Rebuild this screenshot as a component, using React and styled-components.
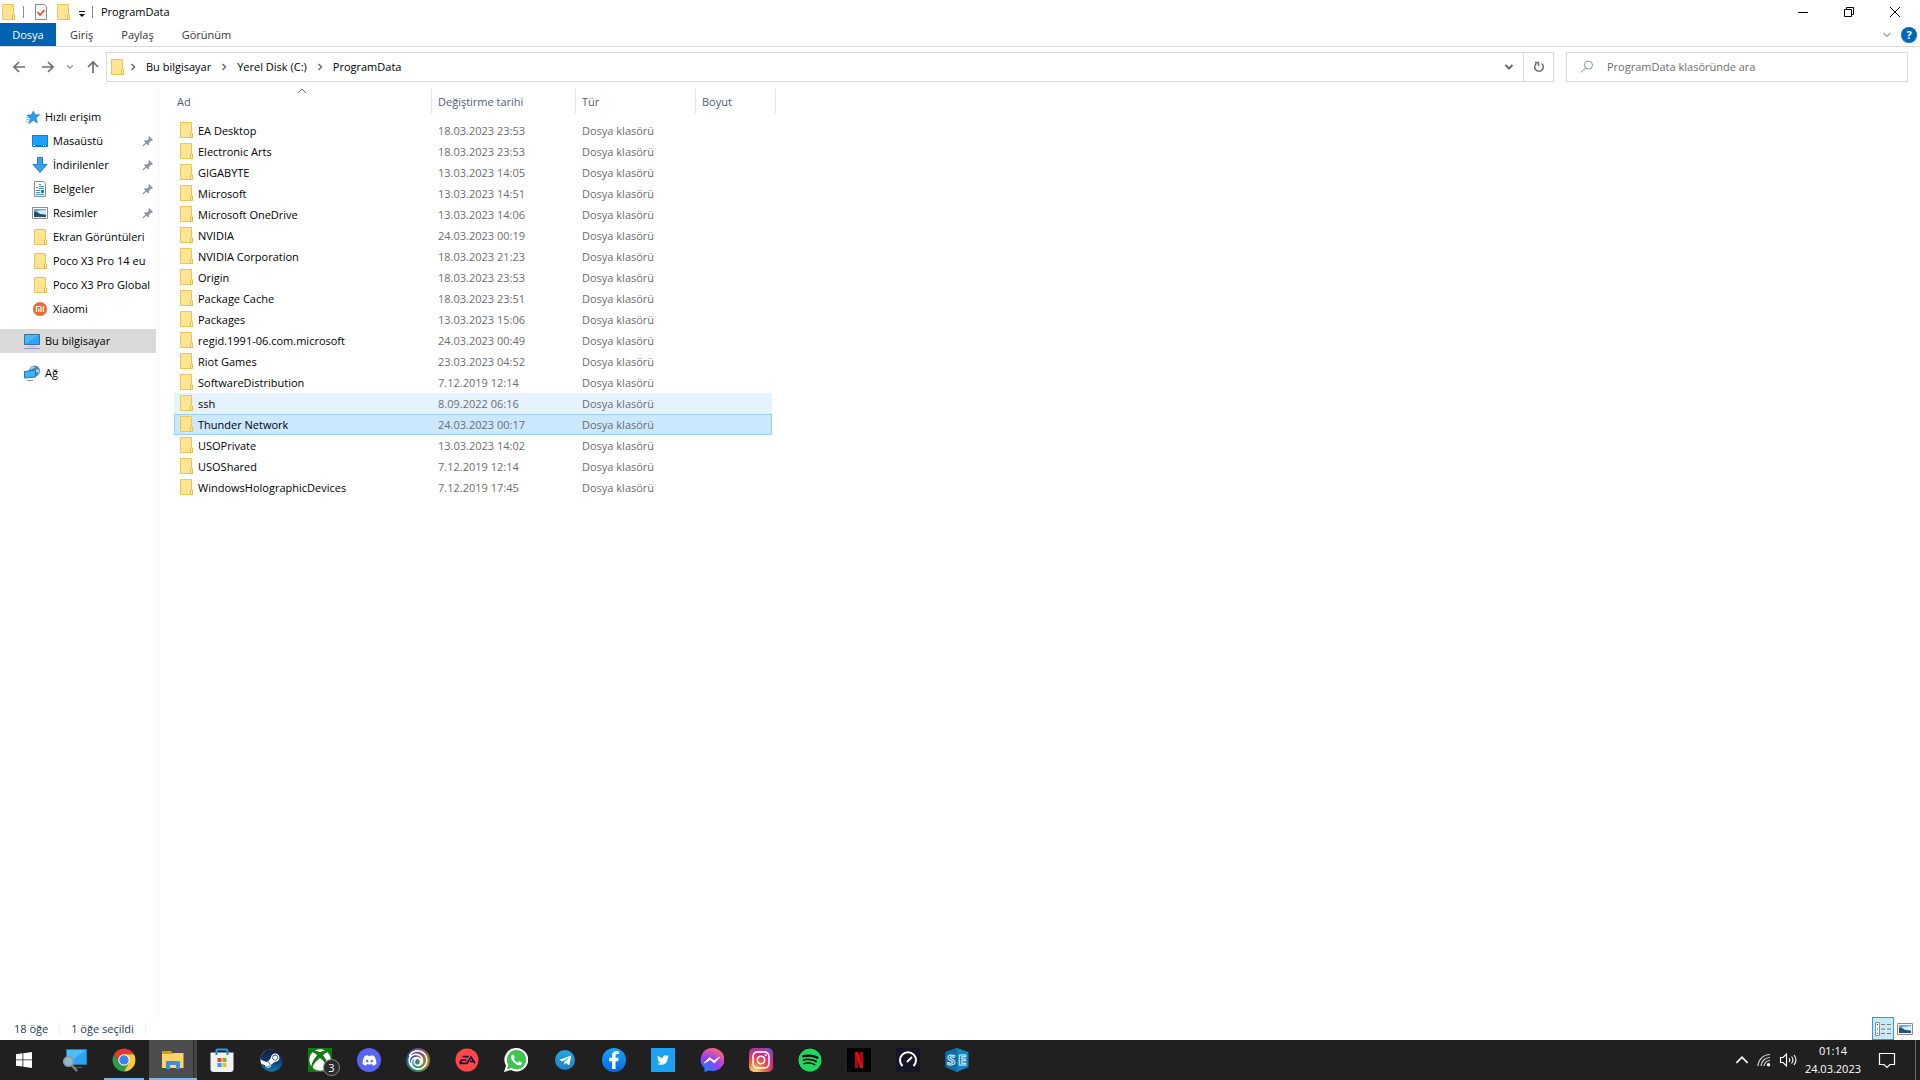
import React, { useState } from 'react';
import styled, { createGlobalStyle } from 'styled-components';
import {
  FaXbox, FaDiscord, FaTelegramPlane, FaFacebookF, FaTwitter, FaInstagram, FaSpotify, FaSteam,
} from 'react-icons/fa';
import { SiUbisoft } from 'react-icons/si';

const GlobalStyle = createGlobalStyle`
  * {
    box-sizing: border-box;
  }
  body {
    margin: 0;
    background: #fff;
    color: #000;
    font-family: "Open Sans", "Noto Sans", sans-serif;
    font-size: 11px;
    line-height: 16px;
  }
  button, input {
    margin: 0;
    padding: 0;
    border: none;
    background: none;
    color: inherit;
    font: inherit;
  }
  svg {
    display: block;
    flex: none;
  }
`;

const files = [
  ['EA Desktop', '18.03.2023 23:53'],
  ['Electronic Arts', '18.03.2023 23:53'],
  ['GIGABYTE', '13.03.2023 14:05'],
  ['Microsoft', '13.03.2023 14:51'],
  ['Microsoft OneDrive', '13.03.2023 14:06'],
  ['NVIDIA', '24.03.2023 00:19'],
  ['NVIDIA Corporation', '18.03.2023 21:23'],
  ['Origin', '18.03.2023 23:53'],
  ['Package Cache', '18.03.2023 23:51'],
  ['Packages', '13.03.2023 15:06'],
  ['regid.1991-06.com.microsoft', '24.03.2023 00:49'],
  ['Riot Games', '23.03.2023 04:52'],
  ['SoftwareDistribution', '7.12.2019 12:14'],
  ['ssh', '8.09.2022 06:16'],
  ['Thunder Network', '24.03.2023 00:17'],
  ['USOPrivate', '13.03.2023 14:02'],
  ['USOShared', '7.12.2019 12:14'],
  ['WindowsHolographicDevices', '7.12.2019 17:45'],
];

// ---- explorer icons ----

const FolderIcon = () => (
  <svg width="16" height="16" viewBox="0 0 16 16">
    <path d="M2.500.5h11v10l1 .5v4.500h-12z" fill="#ffe593" stroke="#ecc653" />
    <path d="M12.500 15.500V11l1-.5 1 .5v4.500z" fill="#ffe9a6" stroke="#e8bd45" />
  </svg>
);

const CheckDocIcon = () => (
  <svg width="16" height="16" viewBox="0 0 16 16">
    <path d="M2.500.5h9l2 2v13h-11z" fill="#f7f7f7" stroke="#8a8a8a" />
    <path d="M4.500 8l2.500 3 4.500-5" fill="none" stroke="#e8442e" strokeWidth="1.600" />
  </svg>
);

const StarIcon = () => (
  <svg width="16" height="16" viewBox="0 0 16 16">
    <path d="M9.500 2l1.400 3.800 4.600.1-3.600 2.900 1.400 5.200-4.100-2.800-4.500 3.300 1.800-5L3 6.300l4.500-.5z" fill="#2ba0ef" stroke="#1684d6" strokeWidth=".8" />
    <path d="M2 8.500h3M2 10.500h3M2 12.500h2" stroke="#8fcaf3" />
  </svg>
);

const DesktopIcon = () => (
  <svg width="16" height="16" viewBox="0 0 16 16">
    <path d="M.5 2.500h15v11H.5z" fill="#1ba1fa" stroke="#0d7fd0" />
    <path d="M1 12.500h14" stroke="#0c68b5" />
    <path d="M1 12.500h2M11 12.500h1M13 12.500h1" stroke="#fff" />
  </svg>
);

const DownloadIcon = () => (
  <svg width="16" height="16" viewBox="0 0 16 16">
    <path d="M5.500.5h5v7h4.500l-7 8-7-8h4.500z" fill="#3f9ce6" stroke="#2b7fc8" />
  </svg>
);

const DocumentIcon = () => (
  <svg width="16" height="16" viewBox="0 0 16 16">
    <path d="M2.500.5h9l2 2v13h-11z" fill="#fff" stroke="#8c8c8c" />
    <path d="M7 3.500h2M4 6.500h2M7 5.500h5M7 7.500h5M4 9.500h4M4 11.500h4M4 13.500h8" stroke="#3c95d2" />
    <path d="M9 9h3v3H9z" fill="#39789b" />
  </svg>
);

const PictureIcon = () => (
  <svg width="16" height="16" viewBox="0 0 16 16">
    <path d="M.5 2.500h15v11H.5z" fill="#fff" stroke="#8c8c8c" />
    <path d="M2 4h12v8H2z" fill="#6ba6e0" />
    <path d="M5 6l9-1v4H7z" fill="#d3ebf6" />
    <path d="M2 6.500c3 0 5 3 12 3.500v2H2z" fill="#275160" />
  </svg>
);

const MiIcon = () => (
  <svg width="16" height="16" viewBox="0 0 16 16">
    <circle cx="8" cy="8" r="7" fill="#ea6a35" />
    <path d="M4.500 11V5.500h3q1.500 0 1.500 1.500v4M6.800 11V7.500M11.300 5v6" fill="none" stroke="#fff" strokeWidth="1.200" />
  </svg>
);

const ComputerIcon = () => (
  <svg width="16" height="16" viewBox="0 0 16 16">
    <path d="M.5 1.500h15v10H.5z" fill="#49b7f5" stroke="#38729b" />
    <path d="M1 11l14-9v9z" fill="#2ba5ee" />
    <path d="M4 13.500h8" stroke="#b4c0cc" />
    <path d="M0 15.500h16" stroke="#8797b8" />
  </svg>
);

const NetworkIcon = () => (
  <svg width="16" height="16" viewBox="0 0 16 16">
    <circle cx="10.500" cy="6" r="5.500" fill="#4d87ad" />
    <path d="M6 3c2-2 4-2 5-1-1 2-3 1-4 3zM12 4l3 1v3l-3-1z" fill="#a9d3ea" />
    <path d="M.5 6.500l11-1.500v7l-11 1z" fill="#3db1f5" stroke="#2377b3" />
    <path d="M3 15.500h6" stroke="#8797b8" />
  </svg>
);

const PinIcon = () => (
  <svg width="12" height="12" viewBox="0 0 12 12">
    <path d="M7 1l4 4-1 1-1-.3-2 2 .2 1.800-1 1L2 6.300l1-1 2 .2 2-2L6.300 2z" fill="#8c96a3" />
    <path d="M4 8l-3 3" stroke="#8c96a3" strokeWidth="1.300" />
  </svg>
);

const Chevron = ({ dir = 'right', size = 10, width = 1.5, color = '#6d6d6d' }) => {
  const paths = { right: 'M3.500 2l3 3-3 3', down: 'M1.500 3l3.500 3.500L8.500 3', up: 'M1 7l4-4 4 4' };
  return (
    <svg width={size} height={size} viewBox="0 0 10 10">
      <path d={paths[dir]} fill="none" stroke={color} strokeWidth={width} />
    </svg>
  );
};

const arrows = {
  left: 'M13 8H2M7 3L2 8l5 5',
  right: 'M3 8h11M9 3l5 5-5 5',
  up: 'M8 14V3M3 8l5-5 5 5',
};

const Arrow = ({ dir }) => (
  <svg width="16" height="16" viewBox="0 0 16 16">
    <path d={arrows[dir]} fill="none" stroke="#6f6f6f" strokeWidth="1.700" />
  </svg>
);

// ---- taskbar icons ----

const WindowsIcon = () => (
  <svg width="16" height="16" viewBox="0 0 16 16">
    <path d="M0 2.200L6.500 1.300v6.200H0zM7.300 1.200L16 0v7.500H7.300zM0 8.300h6.500v6.200L0 13.700zM7.300 8.300H16V16l-8.700-1.200z" fill="#fff" />
  </svg>
);

const SearchScreenIcon = () => (
  <svg width="24" height="24" viewBox="0 0 24 24">
    <path d="M3.500 1.500h20v15h-20z" fill="#4dbcfa" stroke="#2b79a8" />
    <path d="M4 16L23 2v14z" fill="#2da4ee" />
    <path d="M11 19.500h8" stroke="#56636c" />
    <path d="M8.500 17l5.500 6" stroke="#77828d" strokeWidth="2.500" />
    <circle cx="5.500" cy="13.500" r="4.800" fill="#8fb9d0" stroke="#8d979e" strokeWidth="1.500" />
  </svg>
);

const ChromeIcon = () => (
  <svg width="24" height="24" viewBox="1 1 46 46">
    <path d="M4.950 13A22 22 0 0 1 43.050 13H24l-9.500 16.500z" fill="#e33b2e" />
    <path d="M4.950 13A22 22 0 0 0 24 46l9.500-16.500h-19z" fill="#2a9d4b" />
    <path d="M24 46A22 22 0 0 0 43.050 13H24l9.500 16.500z" fill="#fcc934" />
    <circle cx="24" cy="24" r="11" fill="#fff" />
    <circle cx="24" cy="24" r="9" fill="#3e82ee" />
  </svg>
);

const ExplorerIcon = () => (
  <svg width="24" height="24" viewBox="0 0 24 24">
    <path d="M1 3h9l1.500 2H22v3H1z" fill="#dd9a12" />
    <path d="M1 6h10.500L13 5h9.500v15H1z" fill="#ffd469" />
    <path d="M5 21v-7q0-1 1-1h12q1 0 1 1v7h-4v-4H9v4z" fill="#3d8fdb" />
  </svg>
);

const StoreIcon = () => (
  <svg width="24" height="24" viewBox="0 0 24 24">
    <path d="M6.500 7V2.500q0-1 1-1h9q1 0 1 1V7" fill="none" stroke="#24a0ea" strokeWidth="2" />
    <path d="M.5 4.500h23V21q0 3-3 3h-17q-3 0-3-3z" fill="#f2f2f2" />
    <path d="M6.500 4v3M17.500 4v3" stroke="#1789cf" strokeWidth="2" />
    <path d="M7.500 10h4v4h-4z" fill="#e8472c" />
    <path d="M12.500 10h4v4h-4z" fill="#78b828" />
    <path d="M7.500 15h4v4h-4z" fill="#2f9de2" />
    <path d="M12.500 15h4v4h-4z" fill="#f6b51c" />
  </svg>
);

const SteamIcon = () => (
  <>
    <svg width="0" height="0">
      <linearGradient id="steam" x1="0" y1="0" x2="0" y2="1">
        <stop offset="0" stopColor="#15183f" />
        <stop offset=".5" stopColor="#0f3a70" />
        <stop offset="1" stopColor="#1479b0" />
      </linearGradient>
    </svg>
    <FaSteam size={23} fill="url(#steam)" />
  </>
);

const EaIcon = () => (
  <svg width="24" height="24" viewBox="0 0 24 24">
    <circle cx="12" cy="12" r="11.500" fill="#ff4747" />
    <path d="M7.500 8.700h6M6 12h5.500M4.500 15.300h7.500l4-6.300 4 6.300M15 13.500h3.500M6.500 12l-1.500 3" fill="none" stroke="#10103c" strokeWidth="1.700" />
  </svg>
);

const WhatsAppIcon = () => (
  <svg width="24" height="24" viewBox="0 0 24 24">
    <path d="M12.500 0A11.700 11.700 0 1 1 7 22L0 24l2-6.500A11.700 11.700 0 0 1 12.500 0z" fill="#fff" />
    <path d="M12.500 2A9.700 9.700 0 1 1 7.500 20L3 21.200l1.200-4.500A9.700 9.700 0 0 1 12.500 2z" fill="#40c351" />
    <path d="M8.500 6.500c-2 1-2 3-.5 5.500 2 3.200 5 5.500 7.700 5.300 1.500-.2 2.500-1.300 2.300-2.600l-2.700-1.400-1.300 1.500c-2-.7-3.500-2.300-4.200-4l1-1.300-1.200-2.800z" fill="#fff" />
  </svg>
);

const MessengerIcon = () => (
  <svg width="24" height="24" viewBox="0 0 24 24">
    <defs>
      <radialGradient id="messenger" cx=".2" cy="1" r="1.100">
        <stop offset="0" stopColor="#0a8dff" />
        <stop offset=".55" stopColor="#9a3cf8" />
        <stop offset="1" stopColor="#ff6a70" />
      </radialGradient>
    </defs>
    <path d="M12 0a12 11.500 0 1 1-3 22.500L4.500 24V20A11.500 11.500 0 0 1 12 0z" fill="url(#messenger)" />
    <path d="M4.500 15l5-5.500 4.500 3.500 5.500-4-5 6-4.500-3.500z" fill="#fff" stroke="#fff" strokeLinejoin="round" />
  </svg>
);

const NetflixIcon = () => (
  <svg width="24" height="24" viewBox="0 0 24 24">
    <path d="M0 0h24v24H0z" fill="#000" />
    <path d="M8 4h3v16l-3 .3zM13 4h3v16.300l-3-.3z" fill="#b1060f" />
    <path d="M8 4h3l5 16.300-3-.3z" fill="#e50914" />
  </svg>
);

const SpeedIcon = () => (
  <svg width="24" height="24" viewBox="0 0 24 24">
    <path d="M0 0h24v24H0z" fill="#141526" />
    <path d="M6.500 18a8 8 0 1 1 11 0" fill="none" stroke="#fff" strokeWidth="2" />
    <path d="M11 14l5-5" stroke="#fff" strokeWidth="2" />
  </svg>
);

const HexIcon = () => (
  <svg width="24" height="24" viewBox="0 0 24 24">
    <path d="M12 0l11.500 4v15L12 24 .5 19V4z" fill="#1583bd" />
    <path d="M12 0v24L.5 19V4z" fill="#0e6da3" />
    <g fill="#0e6da3" stroke="#d4f1ff" fontSize="15" fontWeight="bold">
      <text x="2" y="17">S</text>
      <text x="13" y="17">E</text>
    </g>
  </svg>
);

const WifiIcon = () => (
  <svg width="14" height="14" viewBox="0 0 14 14">
    <path d="M1 13A12 12 0 0 1 13 1.500M4 13a9 9 0 0 1 9-8.500M7 13a6 6 0 0 1 6-5.500" fill="none" stroke="#d8d8d8" strokeWidth="1.200" />
    <circle cx="11.500" cy="11.800" r="1.700" fill="#fff" />
  </svg>
);

const VolumeIcon = () => (
  <svg width="18" height="14" viewBox="0 0 18 14">
    <path d="M1.500 4.500H4L7.500 1v12L4 9.500H1.500zM10 5q1.500 2 0 4M12.500 3.500q3 3.500 0 7M15 2q4 5 0 10" fill="none" stroke="#fff" strokeWidth="1.100" />
  </svg>
);

const ActionIcon = () => (
  <svg width="18" height="18" viewBox="0 0 18 18">
    <path d="M1.500 2.500h15v11H12l-3 3-3-3H1.500z" fill="none" stroke="#fff" strokeWidth="1.200" />
  </svg>
);

const quickLinks = [
  { name: 'Masaüstü', icon: <DesktopIcon />, pinned: true },
  { name: 'İndirilenler', icon: <DownloadIcon />, pinned: true },
  { name: 'Belgeler', icon: <DocumentIcon />, pinned: true },
  { name: 'Resimler', icon: <PictureIcon />, pinned: true },
  { name: 'Ekran Görüntüleri', icon: <FolderIcon /> },
  { name: 'Poco X3 Pro 14 eu', icon: <FolderIcon /> },
  { name: 'Poco X3 Pro Global', icon: <FolderIcon /> },
  { name: 'Xiaomi', icon: <MiIcon /> },
];

const App = () => {
  const [selected, setSelected] = useState('Thunder Network');
  const [query, setQuery] = useState('');

  return (
    <Window>
      <GlobalStyle />
      <TitleBar>
        <QuickTools>
          <FolderIcon />
          <Separator />
          <ToolButton aria-label="Özellikler"><CheckDocIcon /></ToolButton>
          <ToolButton aria-label="Yeni klasör"><FolderIcon /></ToolButton>
          <ToolButton aria-label="Özelleştir">
            <svg width="9" height="16" viewBox="0 0 9 16">
              <path d="M2 7.500h6" stroke="#000" />
              <path d="M2 10h6l-3 3z" fill="#000" />
            </svg>
          </ToolButton>
          <Separator />
        </QuickTools>
        <Title>ProgramData</Title>
        <WindowButton aria-label="Simge durumuna küçült">
          <svg width="10" height="10" viewBox="0 0 10 10"><path d="M0 5.500h10" stroke="#000" /></svg>
        </WindowButton>
        <WindowButton aria-label="Önceki boyut">
          <svg width="10" height="10" viewBox="0 0 10 10">
            <path d="M.5 2.500h7v7h-7zM2.500 2V.5h7v7H8" fill="none" stroke="#000" />
          </svg>
        </WindowButton>
        <WindowButton aria-label="Kapat">
          <svg width="10" height="10" viewBox="0 0 10 10"><path d="M0 0l10 10M10 0L0 10" stroke="#000" /></svg>
        </WindowButton>
      </TitleBar>

      <Ribbon>
        <FileTab>Dosya</FileTab>
        <Tab>Giriş</Tab>
        <Tab>Paylaş</Tab>
        <Tab>Görünüm</Tab>
        <RibbonEnd>
          <ToolButton aria-label="Şeridi genişlet"><Chevron dir="down" color="#999" width={1.2} /></ToolButton>
          <HelpButton aria-label="Yardım">?</HelpButton>
        </RibbonEnd>
      </Ribbon>

      <NavBar>
        <NavButtons>
          <ToolButton aria-label="Geri"><Arrow dir="left" /></ToolButton>
          <ToolButton aria-label="İleri"><Arrow dir="right" /></ToolButton>
          <ToolButton aria-label="Son konumlar"><Chevron dir="down" size={8} color="#888" /></ToolButton>
          <ToolButton aria-label="Yukarı"><Arrow dir="up" /></ToolButton>
        </NavButtons>
        <AddressBar>
          <FolderIcon />
          <Chevron />
          <Crumb>Bu bilgisayar</Crumb>
          <Chevron />
          <Crumb>Yerel Disk (C:)</Crumb>
          <Chevron />
          <Crumb>ProgramData</Crumb>
          <AddressEnd>
            <ToolButton aria-label="Önceki konumlar"><Chevron dir="down" width={2} /></ToolButton>
            <RefreshButton aria-label="Yenile">
              <svg width="12" height="12" viewBox="0 0 12 12">
                <path d="M3.500 2.500A4.300 4.300 0 1 0 8.500 2.500M2 1.500h3.500V5" fill="none" stroke="#6d6d6d" strokeWidth="1.500" />
              </svg>
            </RefreshButton>
          </AddressEnd>
        </AddressBar>
        <SearchBox>
          <svg width="14" height="14" viewBox="0 0 14 14">
            <circle cx="8.500" cy="5" r="4" fill="none" stroke="#8a9095" />
            <path d="M5.500 8L1 12.500" stroke="#8a9095" />
          </svg>
          <SearchInput
            type="text"
            aria-label="ProgramData klasöründe ara"
            placeholder="ProgramData klasöründe ara"
            value={query}
            onChange={(e) => setQuery(e.target.value)}
          />
        </SearchBox>
      </NavBar>

      <Body>
        <Sidebar>
          <SideGroup>
            <SideLink href="#quick"><StarIcon />Hızlı erişim</SideLink>
            {quickLinks.map((link) => (
              <SideLink key={link.name} href="#folder" $nested>
                {link.icon}
                <SideName>{link.name}</SideName>
                {link.pinned && <PinIcon />}
              </SideLink>
            ))}
          </SideGroup>
          <SideLink href="#computer" $active><ComputerIcon />Bu bilgisayar</SideLink>
          <SideLink href="#network"><NetworkIcon />Ağ</SideLink>
        </Sidebar>
        <Content>
          <FileTable>
            <colgroup>
              <col width="257" />
              <col width="144" />
              <col width="120" />
              <col width="77" />
            </colgroup>
            <thead>
              <tr>
                <HeadCell>
                  Ad
                  <SortMark><Chevron dir="up" width={1} /></SortMark>
                </HeadCell>
                <HeadCell>Değiştirme tarihi</HeadCell>
                <HeadCell>Tür</HeadCell>
                <HeadCell>Boyut</HeadCell>
              </tr>
            </thead>
            <FileRows>
              {files.map(([name, date]) => (
                <FileRow
                  key={name}
                  $hover={name === 'ssh'}
                  $selected={name === selected}
                  onClick={() => setSelected(name)}
                >
                  <Cell $main>
                    <FileName><FolderIcon />{name}</FileName>
                  </Cell>
                  <Cell>{date}</Cell>
                  <Cell>Dosya klasörü</Cell>
                  <Cell />
                </FileRow>
              ))}
            </FileRows>
          </FileTable>
        </Content>
      </Body>

      <StatusBar>
        <StatusText>18 öğe</StatusText>
        <StatusText>1 öğe seçildi</StatusText>
        <ViewButtons>
          <ViewButton aria-label="Ayrıntılar" $active>
            <svg width="16" height="14" viewBox="0 0 16 14">
              <path d="M.5.5h4v13h-4z" fill="#fff" stroke="#8c8c8c" />
              <path d="M6 2.500h4M12 2.500h4M6 7h4M12 7h4M6 11.500h4M12 11.500h4" stroke="#777" />
              <path d="M2 2h1v1H2z" fill="#333" />
              <path d="M2 6.500h1v1H2z" fill="#2a6fd0" />
              <path d="M2 11h1v1H2z" fill="#d33" />
            </svg>
          </ViewButton>
          <ViewButton aria-label="Büyük simgeler"><PictureIcon /></ViewButton>
        </ViewButtons>
      </StatusBar>

      <Taskbar>
        <StartButton aria-label="Başlat"><WindowsIcon /></StartButton>
        <TaskButton aria-label="Ara"><SearchScreenIcon /></TaskButton>
        <TaskButton aria-label="Chrome" $running><ChromeIcon /></TaskButton>
        <TaskButton aria-label="Dosya Gezgini" $current><ExplorerIcon /></TaskButton>
        <TaskButton aria-label="Store"><StoreIcon /></TaskButton>
        <TaskButton aria-label="Steam">
          <Logo $round $bg="radial-gradient(circle, #fff 10px, transparent 11px)"><SteamIcon /></Logo>
        </TaskButton>
        <TaskButton aria-label="Xbox">
          <Logo $bg="#107c10"><FaXbox size={22} /></Logo>
          <Badge>3</Badge>
        </TaskButton>
        <TaskButton aria-label="Discord"><Logo $round $bg="#5865f2"><FaDiscord size={15} /></Logo></TaskButton>
        <TaskButton aria-label="Ubisoft">
          <Logo $round $bg="conic-gradient(#7c4a9a, #8a6b3c, #9a8436, #3d8a60, #1b7f8c, #2b3b86, #7c4a9a)">
            <SiUbisoft size={20} />
          </Logo>
        </TaskButton>
        <TaskButton aria-label="EA"><EaIcon /></TaskButton>
        <TaskButton aria-label="WhatsApp"><WhatsAppIcon /></TaskButton>
        <TaskButton aria-label="Telegram">
          <Logo $round $small $bg="linear-gradient(#2ba3df, #1a86c4)"><FaTelegramPlane size={13} /></Logo>
        </TaskButton>
        <TaskButton aria-label="Facebook">
          <Logo $round $bg="linear-gradient(#18a5fb, #0768e4)"><FaFacebookF size={18} /></Logo>
        </TaskButton>
        <TaskButton aria-label="Twitter"><Logo $bg="#1da1f2"><FaTwitter size={12} /></Logo></TaskButton>
        <TaskButton aria-label="Messenger"><MessengerIcon /></TaskButton>
        <TaskButton aria-label="Instagram">
          <Logo $rounded $bg="radial-gradient(circle at 25% 100%, #fdc468 10%, #f0603f 35%, #d32f7c 60%, #6a4fd0)">
            <FaInstagram size={20} />
          </Logo>
        </TaskButton>
        <TaskButton aria-label="Spotify"><Logo $round $bg="#000" $color="#1ed760"><FaSpotify size={24} /></Logo></TaskButton>
        <TaskButton aria-label="Netflix"><NetflixIcon /></TaskButton>
        <TaskButton aria-label="Speedtest"><SpeedIcon /></TaskButton>
        <TaskButton aria-label="SE"><HexIcon /></TaskButton>
        <Tray>
          <ToolButton aria-label="Gizli simgeler"><Chevron dir="up" size={14} color="#fff" width={1.2} /></ToolButton>
          <ToolButton aria-label="Ağ bağlantısı"><WifiIcon /></ToolButton>
          <ToolButton aria-label="Ses"><VolumeIcon /></ToolButton>
          <Clock>
            <span>01:14</span>
            <span>24.03.2023</span>
          </Clock>
          <ToolButton aria-label="Bildirimler"><ActionIcon /></ToolButton>
          <ShowDesktop aria-label="Masaüstünü göster" />
        </Tray>
      </Taskbar>
    </Window>
  );
};

const Window = styled.div`
  display: flex;
  flex-direction: column;
  min-height: 100vh;
`;

const TitleBar = styled.header`
  display: flex;
  align-items: center;
  height: 23px;
  padding-right: 2px;
`;

const QuickTools = styled.div`
  display: flex;
  align-items: center;
  gap: 6px;
  padding-right: 8px;
`;

const Separator = styled.span`
  width: 1px;
  height: 12px;
  margin: 0 3px 0 1px;
  background: #8c8c8c;
  &:last-child {
    margin: 0;
  }
`;

const Title = styled.span`
  flex: 1;
`;

const ToolButton = styled.button`
  display: flex;
  align-items: center;
  justify-content: center;
`;

const WindowButton = styled.button`
  display: flex;
  align-items: center;
  justify-content: center;
  width: 46px;
  height: 20px;
  &:hover {
    background: #e5e5e5;
  }
`;

const Ribbon = styled.nav`
  display: flex;
  height: 24px;
  border-bottom: 1px solid #dadbdc;
`;

const Tab = styled.button`
  padding: 0 14px;
  color: #333;
`;

const FileTab = styled(Tab)`
  width: 56px;
  padding: 0;
  background: #0063b1;
  color: #fff;
`;

const RibbonEnd = styled.div`
  display: flex;
  align-items: center;
  gap: 9px;
  margin-left: auto;
  padding-right: 3px;
`;

const HelpButton = styled.button`
  width: 16px;
  height: 16px;
  border-radius: 50%;
  background: #0067b8;
  color: #fff;
  font-weight: bold;
`;

const NavBar = styled.div`
  display: flex;
  align-items: center;
  height: 40px;
  padding-right: 12px;
`;

const NavButtons = styled.div`
  display: flex;
  align-items: center;
  gap: 11px;
  width: 106px;
  padding-left: 12px;
`;

const AddressBar = styled.div`
  display: flex;
  flex: 1;
  align-items: center;
  height: 30px;
  padding-left: 2px;
  border: 1px solid #d9d9d9;
  & > svg {
    margin: 0 8px;
  }
  & > svg:first-child {
    margin: 0 -5px 0 0;
  }
`;

const Crumb = styled.button`
  white-space: nowrap;
`;

const AddressEnd = styled.div`
  display: flex;
  align-self: stretch;
  gap: 9px;
  margin-left: auto;
`;

const RefreshButton = styled(ToolButton)`
  width: 30px;
  border-left: 1px solid #d9d9d9;
`;

const SearchBox = styled.label`
  display: flex;
  align-items: center;
  gap: 13px;
  width: 342px;
  height: 30px;
  margin-left: 12px;
  padding-left: 13px;
  border: 1px solid #d9d9d9;
`;

const SearchInput = styled.input`
  flex: 1;
  outline: none;
  &::placeholder {
    color: #6d6d6d;
    opacity: 1;
  }
`;

const Body = styled.div`
  display: flex;
  flex: 1;
`;

const Sidebar = styled.nav`
  display: flex;
  flex-direction: column;
  gap: 8px;
  width: 159px;
  margin-top: 2px;
  padding: 16px 2px 0 0;
  border-right: 1px solid #f5f5f5;
`;

const SideGroup = styled.div`
  display: flex;
  flex-direction: column;
`;

const SideLink = styled.a`
  display: flex;
  align-items: center;
  gap: 5px;
  height: 24px;
  padding-left: ${(props) => (props.$nested ? '32px' : '24px')};
  padding-right: 2px;
  background: ${(props) => (props.$active ? '#d9d9d9' : 'transparent')};
  color: #000;
  text-decoration: none;
  white-space: nowrap;
`;

const SideName = styled.span`
  flex: 1;
`;

const Content = styled.main`
  flex: 1;
  padding: 2px 0 0 15px;
`;

const FileTable = styled.table`
  width: 598px;
  table-layout: fixed;
  border-collapse: separate;
  border-spacing: 0;
`;

const HeadCell = styled.th`
  position: relative;
  height: 25px;
  padding: 0 0 0 6px;
  border-left: 1px solid #e5e5e5;
  color: #4c607a;
  font-weight: normal;
  text-align: left;
  &:first-child {
    padding-left: 3px;
    border-left: none;
  }
  &:last-child {
    box-shadow: 3px 0 0 #fff, 4px 0 0 #e5e5e5;
  }
`;

const SortMark = styled.span`
  position: absolute;
  top: -3px;
  left: calc(50% - 6px);
`;

const FileRows = styled.tbody`
  &::before {
    content: '';
    display: block;
    height: 6px;
  }
`;

const FileRow = styled.tr`
  background: ${(props) => (props.$selected ? '#cce8ff' : props.$hover ? '#e5f3ff' : 'transparent')};
  outline: ${(props) => (props.$selected ? '1px solid #99d1ff' : 'none')};
  outline-offset: -1px;
`;

const Cell = styled.td`
  height: 21px;
  padding: 0 0 0 ${(props) => (props.$main ? '4px' : '7px')};
  color: ${(props) => (props.$main ? '#000' : '#6d6d6d')};
`;

const FileName = styled.span`
  display: flex;
  align-items: center;
  gap: 4px;
  & > svg {
    margin-bottom: 1px;
  }
`;

const StatusBar = styled.footer`
  display: flex;
  align-items: center;
  height: 23px;
  padding: 0 4px 0 3px;
  color: #1e395b;
`;

const StatusText = styled.span`
  padding: 0 11px;
  border-right: 1px solid #f0f0f0;
  line-height: 12px;
`;

const ViewButtons = styled.div`
  display: flex;
  margin-left: auto;
`;

const ViewButton = styled.button`
  display: flex;
  align-items: center;
  justify-content: center;
  width: 22px;
  height: 23px;
  border: 1px solid ${(props) => (props.$active ? '#26a0da' : 'transparent')};
  background: ${(props) => (props.$active ? '#cbe8f6' : 'transparent')};
`;

const Taskbar = styled.footer`
  display: flex;
  gap: 1px;
  height: 40px;
  background: #202020;
  color: #fff;
`;

const TaskButton = styled.button`
  position: relative;
  display: flex;
  align-items: center;
  justify-content: center;
  width: 48px;
  background: ${(props) => (props.$current ? 'linear-gradient(90deg, #4d4d4d 44px, #2c2c2c 44px, #2c2c2c 45px, #454545 45px)' : 'none')};
  &::after {
    content: '';
    display: ${(props) => (props.$running || props.$current ? 'block' : 'none')};
    position: absolute;
    right: ${(props) => (props.$current ? '0' : '4px')};
    bottom: 0;
    left: ${(props) => (props.$current ? '0' : '4px')};
    height: 2px;
    background: #76b9ed;
  }
`;

const StartButton = styled(TaskButton)`
  margin-right: 2px;
`;

const Logo = styled.span`
  display: flex;
  align-items: center;
  justify-content: center;
  width: ${(props) => (props.$small ? '20px' : '24px')};
  height: ${(props) => (props.$small ? '20px' : '24px')};
  border-radius: ${(props) => (props.$round ? '50%' : props.$rounded ? '5px' : '0')};
  background: ${(props) => props.$bg};
  color: ${(props) => props.$color || '#fff'};
`;

const Badge = styled.span`
  position: absolute;
  right: 4px;
  bottom: 4px;
  width: 17px;
  height: 17px;
  border: 1px solid #8a8a8a;
  border-radius: 50%;
  background: #2b2b2b;
  line-height: 15px;
`;

const Tray = styled.div`
  display: flex;
  align-items: center;
  gap: 8px;
  margin-left: auto;
`;

const Clock = styled.time`
  display: flex;
  flex-direction: column;
  align-items: center;
  margin-right: 9px;
  line-height: 18px;
`;

const ShowDesktop = styled.button`
  align-self: stretch;
  width: 5px;
  margin-left: 11px;
  border-left: 1px solid #6a6a6a;
`;

export default App;
